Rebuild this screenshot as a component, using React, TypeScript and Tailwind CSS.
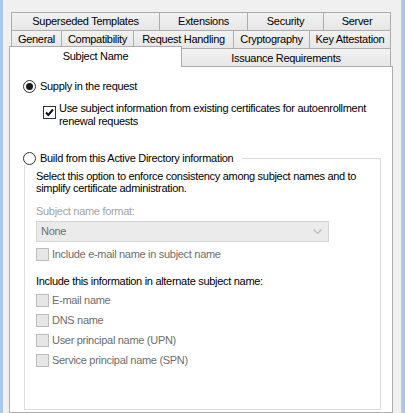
import React from "react";

const font = { fontFamily: '"Liberation Sans", Arial, sans-serif' };

function Tab({ w, label, last }: { w: string; label: string; last?: boolean }) {
  return (
    <div
      className={`${w} h-full flex items-center justify-center border-t border-l border-[#acacac] bg-linear-to-b from-[#f2f2f2] to-[#e6e6e6] text-black ${last ? "border-r" : ""}`}
    >
      {label}
    </div>
  );
}

function Radio({ checked }: { checked?: boolean }) {
  return (
    <span className="w-[13px] h-[13px] rounded-full border border-[#333333] bg-white flex items-center justify-center shrink-0">
      {checked && <span className="w-[7px] h-[7px] rounded-full bg-[#1a1a1a]" />}
    </span>
  );
}

function DisabledBox() {
  return <span className="w-[13px] h-[13px] border border-[#bcbcbc] bg-[#e6e6e6] shrink-0" />;
}

function DisabledCheck({ label }: { label: string }) {
  return (
    <div className="flex items-center gap-[3px] h-[13px]">
      <DisabledBox />
      <span className="text-[#6d6d6d] leading-[13px]">{label}</span>
    </div>
  );
}

export default function App() {
  return (
    <div
      className="w-[405px] h-[413px] overflow-hidden flex text-[11px] tracking-[-0.3px] leading-[13px] text-black"
      style={font}
    >
      <div className="w-[3px] h-full bg-[#aac8eb]" />
      <div className="flex-1 h-full bg-[#f0f0f0] flex flex-col pt-[12px]">
        <div className="ml-[8px] flex h-[18px]">
          <Tab w="w-[148px]" label="Superseded Templates" />
          <Tab w="w-[88px]" label="Extensions" />
          <Tab w="w-[76px]" label="Security" />
          <Tab w="w-[68px]" label="Server" last />
        </div>
        <div className="ml-[8px] flex h-[18px]">
          <Tab w="w-[50px]" label="General" />
          <Tab w="w-[72px]" label="Compatibility" />
          <Tab w="w-[100px]" label="Request Handling" />
          <Tab w="w-[76px]" label="Cryptography" />
          <Tab w="w-[82px]" label="Key Attestation" last />
        </div>
        <div className="ml-[6px] mt-[-2px] flex items-end h-[20px]">
          <div className="relative z-10 w-[173px] h-[21px] -mb-px border-t border-l border-r border-[#acacac] bg-white flex justify-center pt-[3px]">
            Subject Name
          </div>
          <div className="w-[209px] h-[18px] border-t border-r border-[#acacac] bg-linear-to-b from-[#f2f2f2] to-[#e6e6e6] flex items-center justify-center pt-[2px]">
            Issuance Requirements
          </div>
        </div>
        <div className="ml-[6px] w-[384px] flex-1 border border-[#acacac] bg-white flex flex-col pl-[13px] pt-[13px]">
          <div className="flex items-center gap-[4px] h-[13px]">
            <Radio checked />
            <span>Supply in the request</span>
          </div>
          <div className="flex items-start gap-[3px] ml-[20px] mt-[9px]">
            <span className="w-[13px] h-[13px] border border-[#333333] bg-white shrink-0 mt-[4px] flex items-center justify-center">
              <svg width="11" height="11" viewBox="0 0 11 11">
                <path d="M2 5.5 L4.3 8 L9 2.5" fill="none" stroke="#111" strokeWidth="2" />
              </svg>
            </span>
            <span className="leading-[13px]">
              Use subject information from existing certificates for autoenrollment
              <br />
              renewal requests
            </span>
          </div>
          <fieldset className="mt-[24px] ml-[1px] w-[357px] h-[258px] border border-[#dcdcdc] flex flex-col">
            <legend className="-ml-[2px] pr-[9px] bg-white">
              <span className="flex items-center gap-[4px] h-[13px]">
                <Radio />
                <span>Build from this Active Directory information</span>
              </span>
            </legend>
            <div className="pl-[11px] pt-[5px] flex flex-col">
              <div className="leading-[12px]">
                Select this option to enforce consistency among subject names and to
                <br />
                simplify certificate administration.
              </div>
              <div className="mt-[11px] text-[#a3a3a3]">Subject name format:</div>
              <div className="mt-[3px] w-[293px] h-[21px] border border-[#d5d5d5] bg-[#ebebeb] flex items-center justify-between pl-[4px] pr-[6px] text-[#6d6d6d]">
                <span>None</span>
                <svg width="9" height="6" viewBox="0 0 9 6">
                  <path d="M0.5 0.5 L4.5 4.5 L8.5 0.5" fill="none" stroke="#b8b8b8" strokeWidth="1.2" />
                </svg>
              </div>
              <div className="mt-[6px]">
                <DisabledCheck label="Include e-mail name in subject name" />
              </div>
              <div className="mt-[14px]">Include this information in alternate subject name:</div>
              <div className="mt-[6px] flex flex-col gap-[7px]">
                <DisabledCheck label="E-mail name" />
                <DisabledCheck label="DNS name" />
                <DisabledCheck label="User principal name (UPN)" />
                <DisabledCheck label="Service principal name (SPN)" />
              </div>
            </div>
          </fieldset>
        </div>
      </div>
      <div className="w-[4px] h-full border-l border-[#c9c9c9] bg-[#aac8eb]" />
    </div>
  );
}
